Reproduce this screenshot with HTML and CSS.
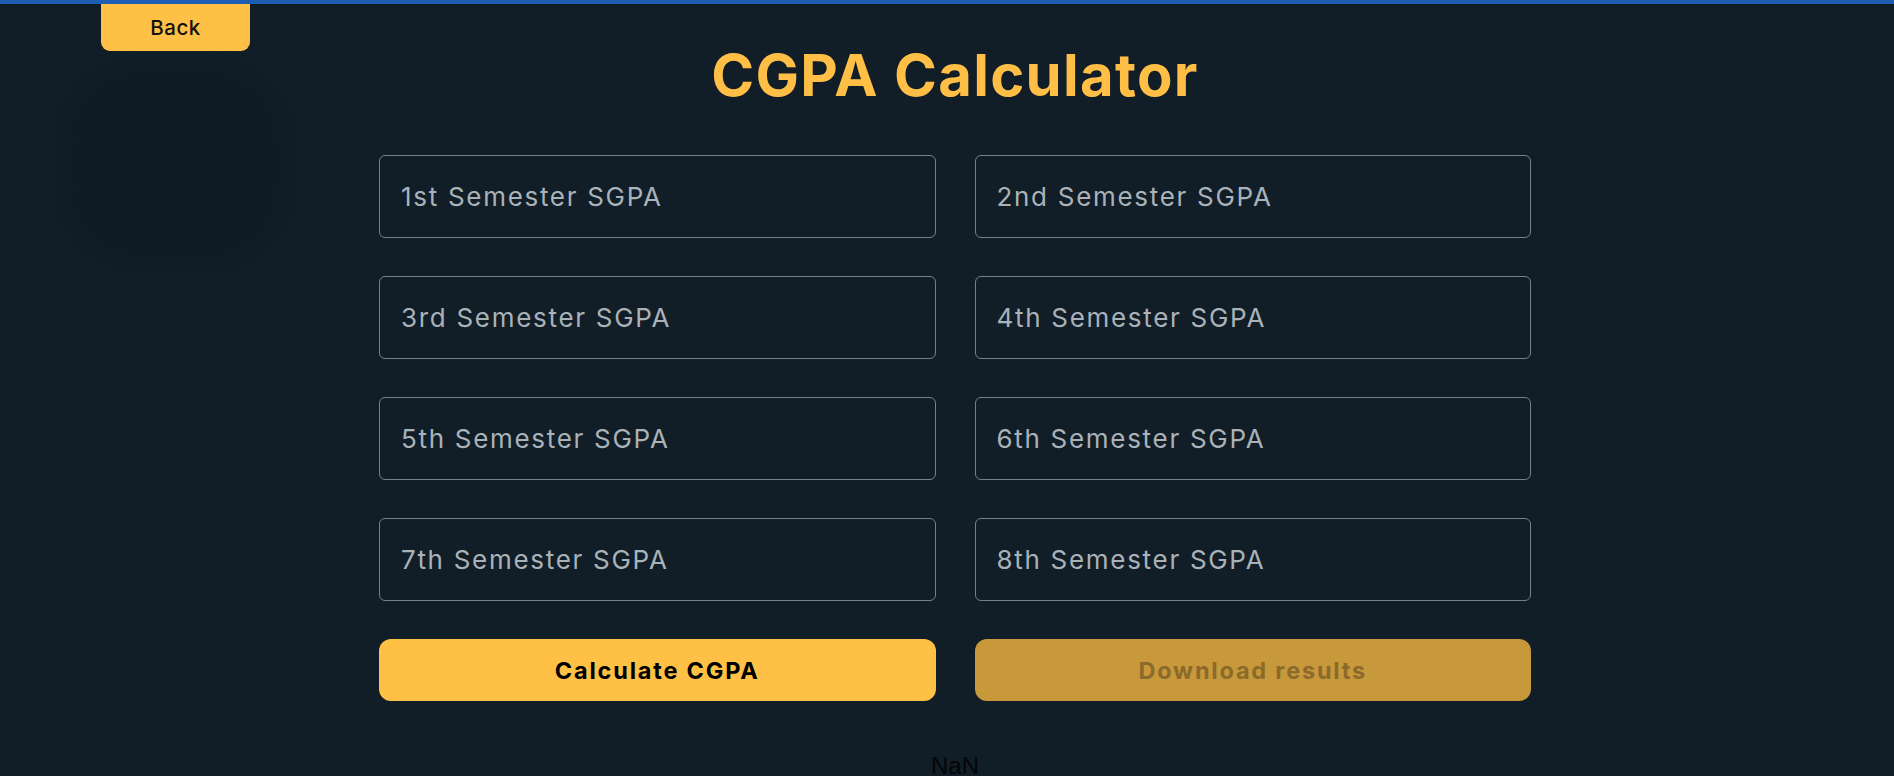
FILE: index.html
```html
<!DOCTYPE html>
<html lang="en">
<head>
<meta charset="UTF-8" />
<meta name="viewport" content="width=device-width, initial-scale=1" />
<title>CGPA Calculator</title>
<link rel="stylesheet" href="styles.css">
</head>
<body>

<div class="topline"></div>
<div class="glow"></div>

<div class="page">
  <!-- Header: back button + title -->
  <div class="header">
    <button class="back">Back</button>
    <h1>CGPA Calculator</h1>
    <div></div>
  </div>

  <!-- Semester inputs -->
  <div class="grid">
    <input type="number" placeholder="1st Semester SGPA" />
    <input type="number" placeholder="2nd Semester SGPA" />
    <input type="number" placeholder="3rd Semester SGPA" />
    <input type="number" placeholder="4th Semester SGPA" />
    <input type="number" placeholder="5th Semester SGPA" />
    <input type="number" placeholder="6th Semester SGPA" />
    <input type="number" placeholder="7th Semester SGPA" />
    <input type="number" placeholder="8th Semester SGPA" />
    <button class="btn">Calculate CGPA</button>
    <button class="btn" disabled>Download results</button>
  </div>

  <p class="result">NaN</p>
</div>

</body>
</html>
```

FILE: styles.css
```css
* {
  margin: 0; padding: 0; box-sizing: border-box;
}
body {
  background: #111e27;
  font-family: 'Inter', 'Open Sans', sans-serif;
  min-height: 100vh;
  overflow: hidden;
}
.topline {
  height: 4px;
  background: #1d5db3;
}
.glow {
  position: absolute;
  left: 62px;
  top: 64px;
  width: 226px;
  height: 200px;
  border-radius: 80px;
  background: #0f1b23;
  filter: blur(8px);
  opacity: 0.7;
}
.page {
  position: relative;
  padding-left: 16px;
}
.header {
  display: grid;
  grid-template-columns: 1fr auto 1fr;
  align-items: start;
}
.back {
  margin-left: 85px;
  width: 149px;
  height: 47px;
  border: none;
  border-radius: 0 0 9px 9px;
  background: #ffc046;
  color: #111;
  font-family: 'Inter', sans-serif;
  font-size: 20.5px;
  font-weight: 500;
  letter-spacing: 0.5px;
  justify-self: start;
  cursor: pointer;
}
h1 {
  margin-top: 36px;
  color: #ffbf46;
  font-size: 58px;
  line-height: 70px;
  font-weight: 700;
  letter-spacing: 1.3px;
}
.grid {
  width: 1152px;
  margin: 45px auto 0;
  display: grid;
  grid-template-columns: 1fr 1fr;
  grid-template-rows: repeat(4, 83px) 62px;
  gap: 38px 39px;
}
.grid input {
  background: transparent;
  border: 1px solid #75808a;
  border-radius: 6px;
  padding: 0 21px;
  font-family: 'Inter', sans-serif;
  font-size: 26px;
  letter-spacing: 1.7px;
  color: #d8dde1;
  outline: none;
}
.grid input::placeholder {
  color: #aab2b9;
}
.btn {
  border: none;
  border-radius: 12px;
  background: #ffc046;
  color: #000;
  font-family: 'Inter', sans-serif;
  font-size: 23.5px;
  font-weight: 700;
  letter-spacing: 1.8px;
  cursor: pointer;
}
.btn:disabled {
  background: #c8993a;
  color: #8b6a2b;
  cursor: default;
}
.result {
  margin-top: 51px;
  text-align: center;
  font-family: 'Liberation Sans', sans-serif;
  font-size: 24px;
  color: #050505;
}
```
